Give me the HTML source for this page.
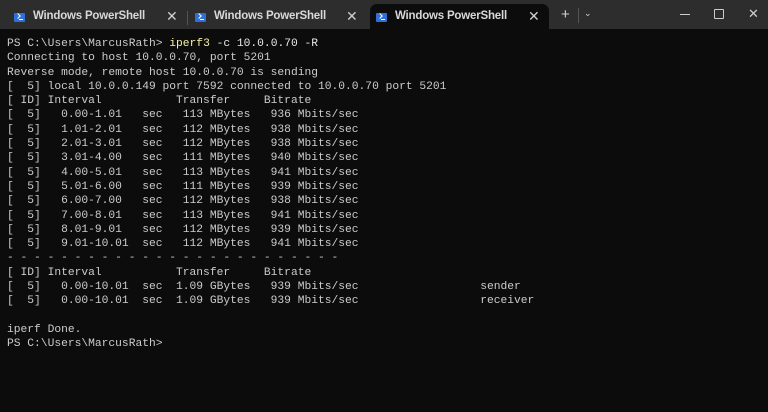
<!DOCTYPE html>
<html><head><meta charset="utf-8"><style>
html,body{margin:0;padding:0;}
body{width:768px;height:412px;background:#0c0c0c;overflow:hidden;position:relative;font-family:"Liberation Sans",sans-serif;}
.bar{position:absolute;left:0;top:0;width:768px;height:29px;background:#2d2d2d;}
.tab{position:absolute;top:4px;height:25px;}
.tab .t{position:absolute;top:6px;font-size:11.5px;color:#d8d8d8;font-weight:bold;letter-spacing:-0.2px;}
.tab .x{position:absolute;top:4px;font-size:14px;color:#cfcfcf;}
.act{background:#0c0c0c;border-radius:7px 7px 0 0;}
.ico{position:absolute;top:9px;width:11px;height:9px;background:#2f6fd6;border-radius:1px;}
.ico:after{content:"";position:absolute;left:2px;top:1px;width:3px;height:3px;border-right:1.3px solid #fff;border-bottom:1.3px solid #fff;transform:rotate(-45deg);}
.ico:before{content:"";position:absolute;left:5px;top:6px;width:4px;height:1px;background:#fff;}
pre{position:absolute;left:7px;top:37px;margin:0;font-family:"Liberation Mono",monospace;font-size:11.28px;line-height:14.29px;color:#cccccc;}
.y{color:#f9f1a5}.w{color:#e8e8e8}
.c{position:absolute;color:#d0d0d0;}
</style></head><body>
<div class="bar"></div>
<div class="tab" style="left:0;width:186px"><div class="ico" style="left:14px"></div><div class="t" style="left:33px">Windows PowerShell</div><div class="x" style="left:166px">✕</div></div>
<div style="position:absolute;left:187px;top:11px;width:1px;height:14px;background:#555"></div>
<div class="tab" style="left:188px;width:180px"><div class="ico" style="left:7px"></div><div class="t" style="left:26px">Windows PowerShell</div><div class="x" style="left:158px">✕</div></div>
<div class="tab act" style="left:370px;width:179px"><div class="ico" style="left:6px"></div><div class="t" style="left:25px">Windows PowerShell</div><div class="x" style="left:158px">✕</div></div>
<div class="c" style="left:561px;top:6px;font-size:15px">+</div>
<div style="position:absolute;left:578px;top:8px;width:1px;height:15px;background:#555"></div>
<div class="c" style="left:584px;top:8px;font-size:9px">&#8964;</div>
<div style="position:absolute;left:680px;top:14px;width:10px;height:1px;background:#ccc"></div>
<div style="position:absolute;left:714px;top:9px;width:8px;height:8px;border:1px solid #ccc;border-radius:1px"></div>
<div class="c" style="left:748px;top:6px;font-size:13px">✕</div>
<pre>PS C:\Users\MarcusRath&gt; <span class="y">iperf3</span> <span class="w">-c 10.0.0.70 -R</span>
Connecting to host 10.0.0.70, port 5201
Reverse mode, remote host 10.0.0.70 is sending
[  5] local 10.0.0.149 port 7592 connected to 10.0.0.70 port 5201
[ ID] Interval           Transfer     Bitrate
[  5]   0.00-1.01   sec   113 MBytes   936 Mbits/sec
[  5]   1.01-2.01   sec   112 MBytes   938 Mbits/sec
[  5]   2.01-3.01   sec   112 MBytes   938 Mbits/sec
[  5]   3.01-4.00   sec   111 MBytes   940 Mbits/sec
[  5]   4.00-5.01   sec   113 MBytes   941 Mbits/sec
[  5]   5.01-6.00   sec   111 MBytes   939 Mbits/sec
[  5]   6.00-7.00   sec   112 MBytes   938 Mbits/sec
[  5]   7.00-8.01   sec   113 MBytes   941 Mbits/sec
[  5]   8.01-9.01   sec   112 MBytes   939 Mbits/sec
[  5]   9.01-10.01  sec   112 MBytes   941 Mbits/sec
- - - - - - - - - - - - - - - - - - - - - - - - -
[ ID] Interval           Transfer     Bitrate
[  5]   0.00-10.01  sec  1.09 GBytes   939 Mbits/sec                  sender
[  5]   0.00-10.01  sec  1.09 GBytes   939 Mbits/sec                  receiver

iperf Done.
PS C:\Users\MarcusRath&gt;</pre>
</body></html>
